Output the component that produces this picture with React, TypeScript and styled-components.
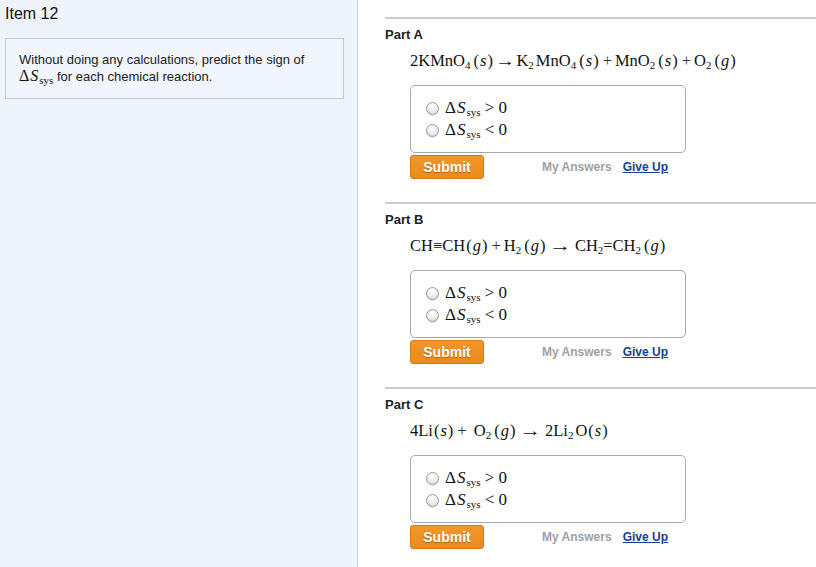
import React from "react";
import styled, { createGlobalStyle } from "styled-components";

const GlobalStyle = createGlobalStyle`
  html, body {
    margin: 0;
    padding: 0;
    background: #ffffff;
    font-family: "Liberation Sans", Arial, sans-serif;
    color: #222;
  }
`;

const Page = styled("div")`
  display: flex;
  width: 816px;
  height: 567px;
  overflow: hidden;
`;

const Sidebar = styled("aside")`
  width: 358px;
  flex: none;
  background: #eff4fb;
  border-right: 1px solid #c3d3e8;
  padding: 5px 13px 0 5px;
  box-sizing: border-box;
`;

const ItemTitle = styled("h1")`
  margin: 0;
  font-size: 16px;
  font-weight: normal;
  line-height: 18px;
  color: #111;
`;

const Intro = styled("div")`
  margin-top: 15px;
  height: 61px;
  box-sizing: border-box;
  border: 1px solid #b9cde6;
  background: #f1f5fc;
  padding: 13px 13px 0 13px;
  font-size: 13px;
  line-height: 16px;
  color: #222;
`;

const Main = styled("main")`
  flex: 1;
  padding: 17px 0 0 27px;
`;

const Part = styled("section")`
  border-top: 2px solid #cccccc;
  padding-top: 8px;
  height: 185px;
  box-sizing: border-box;
`;

const PartTitle = styled("h2")`
  margin: 0;
  font-size: 13px;
  font-weight: bold;
  line-height: 16px;
  color: #222;
`;

const Body = styled("div")`
  padding-left: 25px;
`;

const Equation = styled("div")`
  margin-top: 8px;
  font-family: "Liberation Serif", "Times New Roman", serif;
  font-size: 16.5px;
  line-height: 20px;
  color: #111;
  white-space: nowrap;
`;

const Var = styled("i")`
  font-style: italic;
  padding: 0 1px;
`;

const Sub = styled("sub")<{ $gap?: boolean }>`
  font-size: 11px;
  vertical-align: -3px;
  line-height: 0;
  padding-right: ${(p) => (p.$gap ? "2px" : "0")};
`;

const Paren = styled("span")`
  padding: 0 1px;
`;

const Op = styled("span")`
  padding: 0 3px;
  color: #333;
`;

const Arrow = styled("span")<{ $tight?: boolean }>`
  display: inline-block;
  transform: scaleX(${(p) => (p.$tight ? 1.2 : 1.35)});
  padding: ${(p) => (p.$tight ? "0 3px" : "0 6px")};
`;

const AnswerBox = styled("div")`
  margin-top: 14px;
  width: 276px;
  height: 68px;
  box-sizing: border-box;
  border: 1px solid #a9a9a9;
  border-radius: 5px;
  padding: 11px 0 0 15px;
`;

const Choice = styled("label")`
  display: flex;
  align-items: center;
  height: 22px;
  gap: 6px;
`;

const Radio = styled("input")`
  appearance: none;
  margin: 0;
  width: 13px;
  height: 13px;
  border-radius: 50%;
  border: 1px solid #9c9c9c;
  background: radial-gradient(circle at 50% 30%, #ffffff 0%, #f0f0f0 45%, #d2d2d2 100%);
  box-shadow: 0 1px 1px rgba(0, 0, 0, 0.12);
`;

const ChoiceText = styled("span")<{ $small?: boolean }>`
  font-family: "Liberation Serif", "Times New Roman", serif;
  font-size: ${(p) => (p.$small ? "16px" : "17px")};
  line-height: ${(p) => (p.$small ? "16px" : "22px")};
  color: #111;
`;

const Actions = styled("div")`
  display: flex;
  align-items: center;
  margin-top: 2px;
  width: 276px;
`;

const SubmitButton = styled("button")`
  width: 74px;
  height: 24px;
  border: 1px solid #d47b16;
  border-radius: 3px;
  background: linear-gradient(#f3962a, #ec8a1d);
  color: #fff;
  font-family: "Liberation Sans", Arial, sans-serif;
  font-weight: bold;
  font-size: 14px;
  text-shadow: 0 1px 1px rgba(120, 60, 0, 0.5);
  padding: 0;
`;

const Links = styled("div")`
  margin-left: auto;
  margin-right: 18px;
  display: flex;
  gap: 11px;
  font-size: 12px;
  font-weight: bold;
`;

const MutedLink = styled("span")`
  color: #a0a0a0;
`;

const GiveUp = styled("a")`
  color: #143f94;
  text-decoration: underline;
`;

const DeltaS = () => (
  <>
    Δ<Var>S</Var>
    <Sub>sys</Sub>
  </>
);

const Phase = ({ p }: { p: string }) => (
  <Paren>
    (<Var>{p}</Var>)
  </Paren>
);

const equations: React.ReactNode[] = [
  <>
    2KMnO<Sub $gap>4</Sub>
    <Phase p="s" />
    <Arrow $tight>→</Arrow>K<Sub $gap>2</Sub>MnO<Sub $gap>4</Sub>
    <Phase p="s" />
    <Op>+</Op>MnO<Sub $gap>2</Sub>
    <Phase p="s" />
    <Op>+</Op>O<Sub $gap>2</Sub>
    <Phase p="g" />
  </>,
  <>
    CH≡CH
    <Phase p="g" />
    <Op>+</Op>H<Sub $gap>2</Sub>
    <Phase p="g" />
    <Arrow>→</Arrow>CH<Sub>2</Sub>=CH<Sub $gap>2</Sub>
    <Phase p="g" />
  </>,
  <>
    4Li
    <Phase p="s" />
    <Op>+</Op> O<Sub $gap>2</Sub>
    <Phase p="g" />
    <Arrow>→</Arrow>2Li<Sub $gap>2</Sub>O
    <Phase p="s" />
  </>,
];

const parts = ["A", "B", "C"];

export default function App() {
  return (
    <Page>
      <GlobalStyle />
      <Sidebar>
        <ItemTitle>Item 12</ItemTitle>
        <Intro>
          Without doing any calculations, predict the sign of
          <br />
          <ChoiceText $small>
            <DeltaS />
          </ChoiceText>{" "}
          for each chemical reaction.
        </Intro>
      </Sidebar>
      <Main>
        {parts.map((p, i) => (
          <Part key={p}>
            <PartTitle>Part {p}</PartTitle>
            <Body>
              <Equation>{equations[i]}</Equation>
              <AnswerBox>
                <Choice>
                  <Radio type="radio" name={"part" + p} />
                  <ChoiceText>
                    <DeltaS /> &gt; 0
                  </ChoiceText>
                </Choice>
                <Choice>
                  <Radio type="radio" name={"part" + p} />
                  <ChoiceText>
                    <DeltaS /> &lt; 0
                  </ChoiceText>
                </Choice>
              </AnswerBox>
              <Actions>
                <SubmitButton>Submit</SubmitButton>
                <Links>
                  <MutedLink>My Answers</MutedLink>
                  <GiveUp href="#">Give Up</GiveUp>
                </Links>
              </Actions>
            </Body>
          </Part>
        ))}
      </Main>
    </Page>
  );
}
